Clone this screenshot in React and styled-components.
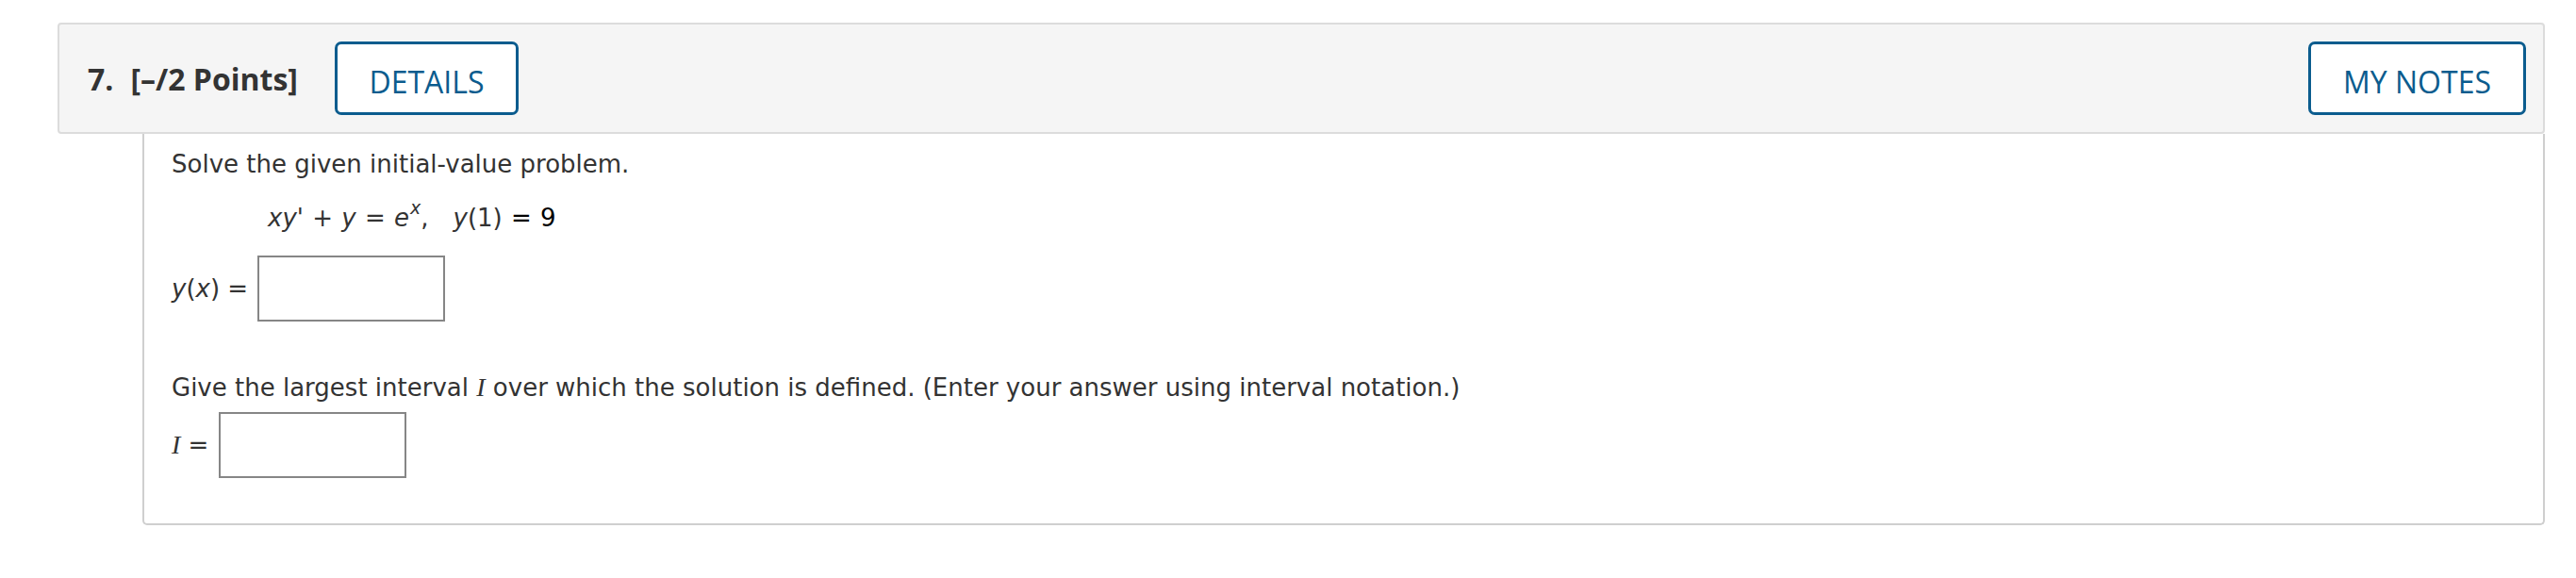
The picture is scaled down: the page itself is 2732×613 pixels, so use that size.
import React from 'react'
import styled, { createGlobalStyle } from 'styled-components'

const GlobalStyle = createGlobalStyle`
  html, body {
    margin: 0;
    padding: 0;
    background: #fff;
  }
`

const Page = styled.div`
  padding: 24px 33px 40px 61px;
`

const QuestionHeader = styled.div`
  display: flex;
  align-items: center;
  height: 114px;
  background: #f5f5f5;
  border: 2px solid #dcdcdc;
  border-radius: 4px;
  padding: 0 18px 0 30px;
  font-family: "Open Sans", "Liberation Sans", sans-serif;
  color: #333;
`

const QNumber = styled.span`
  font-size: 32px;
  font-weight: 700;
  margin-right: 18px;
`

const Points = styled.span`
  font-size: 32px;
  font-weight: 700;
`

const OutlineButton = styled.button`
  box-sizing: border-box;
  width: ${(p) => p.w}px;
  height: 78px;
  margin-left: ${(p) => (p.right ? 'auto' : '39px')};
  background: #fff;
  border: 3px solid #0b5c8e;
  border-radius: 7px;
  color: #0b5c8e;
  font-family: "Open Sans", "Liberation Sans", sans-serif;
  font-size: 32px;
  padding: 6px 0 0;
  cursor: pointer;
`

const QuestionBody = styled.div`
  margin-left: 90px;
  border: 2px solid #cfcfcf;
  border-top: none;
  border-radius: 0 0 5px 5px;
  padding: 13px 29px 48px;
  font-family: Verdana, "DejaVu Sans", sans-serif;
  font-size: 26px;
  line-height: 39px;
  color: #333;
`

const Para = styled.div`
  margin-top: ${(p) => p.mt || 0}px;
`

const Equation = styled.div`
  margin-top: 18px;
  padding-left: 102px;
  word-spacing: 1px;
`

const Var = styled.i`
  font-style: italic;
`

const SerifVar = styled.i`
  font-family: "Liberation Serif", "Times New Roman", serif;
  font-style: italic;
  font-size: 28px;
`

const Sup = styled.sup`
  font-size: 19px;
  line-height: 0;
  vertical-align: 13px;
  margin-left: 1px;
`

const Gap = styled.span`
  display: inline-block;
  width: ${(p) => p.w}px;
`

const Dark = styled.span`
  color: #000;
`

const AnswerRow = styled.div`
  display: flex;
  align-items: center;
  margin-top: ${(p) => p.mt}px;
`

const Label = styled.span`
  margin-right: ${(p) => p.gap}px;
`

const AnswerBox = styled.div`
  box-sizing: border-box;
  width: 199px;
  height: 70px;
  border: 2px solid #868686;
  background: #fff;
`

export default function App() {
  return (
    <>
      <GlobalStyle />
      <Page>
        <QuestionHeader>
          <QNumber>7.</QNumber>
          <Points>[–/2 Points]</Points>
          <OutlineButton w={195}>DETAILS</OutlineButton>
          <OutlineButton w={231} right>MY NOTES</OutlineButton>
        </QuestionHeader>
        <QuestionBody>
          <Para>Solve the given initial-value problem.</Para>
          <Equation>
            <Var>xy</Var>' + <Var>y</Var> = <Var>e</Var>
            <Sup><Var>x</Var></Sup>,<Gap w={26} /><Var>y</Var>(1) <Dark>= 9</Dark>
          </Equation>
          <AnswerRow mt={20}>
            <Label gap={10}><Var>y</Var>(<Var>x</Var>) =</Label>
            <AnswerBox />
          </AnswerRow>
          <Para mt={50}>
            Give the largest interval <SerifVar>I</SerifVar> over which the solution is defined. (Enter
            your answer using interval notation.)
          </Para>
          <AnswerRow mt={6}>
            <Label gap={11}><SerifVar>I</SerifVar> =</Label>
            <AnswerBox />
          </AnswerRow>
        </QuestionBody>
      </Page>
    </>
  )
}
